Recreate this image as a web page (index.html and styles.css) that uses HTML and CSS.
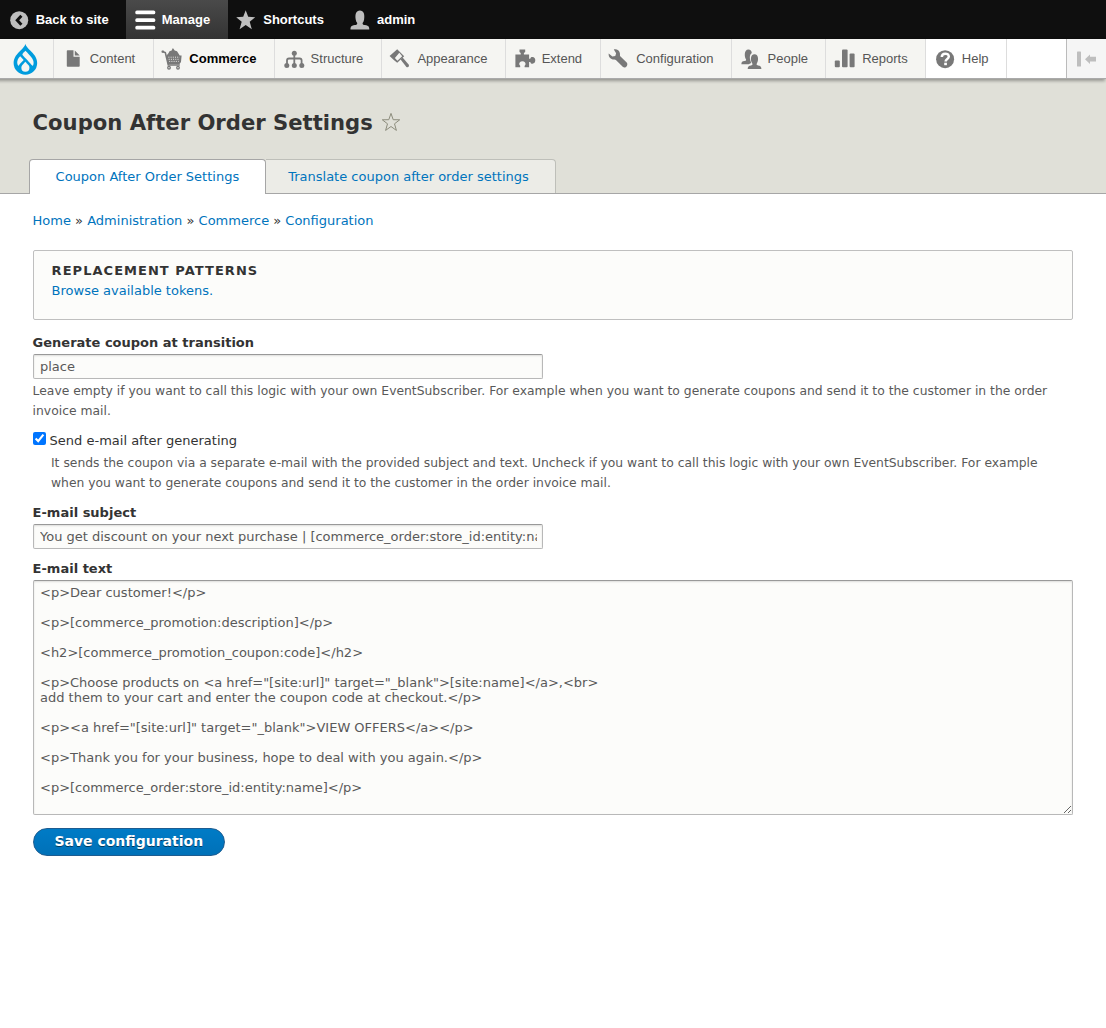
FILE: index.html
```html
<!DOCTYPE html>
<html lang="en">

<head>
    <meta charset="UTF-8">
    <meta name="viewport" content="width=device-width, initial-scale=1.0">
    <title>Coupon After Order Settings</title>
    <link rel="stylesheet" href="styles.css">
</head>

<body>
    <div class="toolbar">
        <nav class="toolbar-bar">
            <a class="toolbar-item" href="#">
                <svg class="icon" viewBox="0 0 20 20"><circle cx="10.2" cy="10.2" r="9" fill="#bebebe"/><path d="M12.4 5.700L8.200 10.200l4.200 4.500" fill="none" stroke="#0f0f0f" stroke-width="2.900"/></svg>
                Back to site
            </a>
            <a class="toolbar-item is-active" href="#">
                <svg class="icon" viewBox="0 0 20 20" fill="#fff"><rect x="0.3" y="0.5" width="20" height="3.8" rx="1.6"/><rect x="0.3" y="8.2" width="20" height="3.8" rx="1.6"/><rect x="0.3" y="15.8" width="20" height="3.8" rx="1.6"/></svg>
                Manage
            </a>
            <a class="toolbar-item" href="#">
                <svg class="icon" viewBox="0 0 20 20" fill="#bebebe"><path d="M9.700.2l2.500 6.600 7 .5-5.500 4.400 2.100 7.500-6.100-4.100-6.100 4.100 2.100-7.500L.2 7.300l7-.5z"/></svg>
                Shortcuts
            </a>
            <a class="toolbar-item" href="#">
                <svg class="icon" viewBox="0 0 20 20" fill="#bebebe"><path d="M.5 19.400c0-3 1-3.500 4.300-4.300 1.700-.4 2.600-.8 2.400-2.200-.8-.9-1.300-2-1.500-3.500C4.900 4 6.100.4 9.900.4s5 3.600 4.200 9c-.2 1.500-.7 2.600-1.500 3.500-.2 1.400.7 1.800 2.400 2.200 3.300.8 4.300 1.300 4.300 4.300z"/></svg>
                admin
            </a>
        </nav>
        <nav class="toolbar-tray">
            <a class="tray-item tray-home" href="#" aria-label="Home">
                <svg class="drop" viewBox="0 0 24 24" fill="#009cde"><path d="M15.78 5.113C14.09 3.425 12.48 1.815 11.998 0c-.48 1.815-2.09 3.425-3.778 5.113-2.534 2.53-5.405 5.4-5.405 9.702a9.184 9.185 0 1 0 18.368 0c0-4.303-2.871-7.171-5.405-9.702M6.72 16.954c-.563-.019-2.64-3.6 1.215-7.416l2.55 2.788a.218.218 0 0 1-.016.325c-.61.625-3.204 3.227-3.527 4.126-.066.186-.164.18-.222.177M12 21.677a3.158 3.158 0 0 1-3.158-3.159 3.291 3.291 0 0 1 .787-2.087c.57-.696 2.37-2.655 2.37-2.655s1.774 1.988 2.367 2.649a3.09 3.09 0 0 1 .792 2.093A3.158 3.158 0 0 1 12 21.677m6.046-5.123c-.068.15-.223.398-.431.405-.371.014-.411-.177-.686-.583-.604-.892-5.864-6.39-6.848-7.455-.866-.935-.122-1.595.223-1.94C10.736 6.547 12 5.285 12 5.285s3.766 3.574 5.336 6.016c1.57 2.443 1.029 4.556.71 5.253"/></svg>
            </a>
            <a class="tray-item" href="#">
                <svg class="icon" viewBox="0 0 20 20"><path d="M4.600 1.200h5.900v6.600h6.200v9.200a.8.8 0 0 1-.8.8H4.600a.8.8 0 0 1-.8-.8V2a.8.8 0 0 1 .8-.8zM11.800 1.500l4.900 4.900h-4.900z"/></svg>
                Content
            </a>
            <a class="tray-item is-active" href="#">
                <svg class="icon" viewBox="0 0 20 20"><path d="M4.600 6.400l1.800-2.200L7.700 2l1.700-.2L10.900-.9l1.800 2.300 2.300.9 1.300 1.900 1.400 2.200h1.900l-.6 6.500-1.700 2.400H6z"/><path d="M.3 2.500l3 1.100L6.300 16h11.500" fill="none" stroke="#787878" stroke-width="1.600"/><rect x="-.5" y="1.600" width="2.600" height="2.200" rx=".8"/><g fill="none" stroke="#f5f5f2" stroke-dasharray="1 1.200" stroke-width=".9"><path d="M6.400 8.200h11.200M6.700 10.300h10.500M7.200 12.400h9.500"/></g><circle cx="7" cy="18.700" r="1.300" fill="none" stroke="#787878" stroke-width="1.300"/><circle cx="16" cy="18.700" r="1.300" fill="none" stroke="#787878" stroke-width="1.300"/></svg>
                Commerce
            </a>
            <a class="tray-item" href="#">
                <svg class="icon" viewBox="0 0 20 20"><path d="M10.300 5v11.500M3 16.500v-5q0-2 2-2h10.600q2 0 2 2v5" fill="none" stroke="#787878" stroke-width="1.800"/><circle cx="10.300" cy="4.300" r="2.500"/><circle cx="2.800" cy="16.500" r="2.500"/><circle cx="10.300" cy="16.500" r="2.500"/><circle cx="17.800" cy="16.500" r="2.500"/></svg>
                Structure
            </a>
            <a class="tray-item" href="#">
                <svg class="icon" viewBox="0 0 20 20"><path fill-rule="evenodd" d="M7.200.3l7 6.900-7 6.600-3.100-2.600-4.500-4.100zM9.300 3.700L4.900 9l2.500 2.700 4.800-4.500z"/><path d="M10.600 10.400l2-2 6 7.200c1.300 1.600-.7 3.600-2.200 2.300z"/></svg>
                Appearance
            </a>
            <a class="tray-item" href="#">
                <svg class="icon" viewBox="0 0 20 20"><path d="M4.500.6h5.700v2.300L8.900 4v1.600h5.200v4.200h1.100l.8-1.500c2.700-.9 4.300.5 4.300 3s-1.600 4-4.300 3.100l-.8-1.500h-1.100v5.300H9.700l-.2-1.200 1-1.400c.4-2-1-3.400-3.100-3.400s-3.500 1.400-3.100 3.400l1 1.400-.2 1.200H.4V5.600h5.300V4L4.500 2.900z"/></svg>
                Extend
            </a>
            <a class="tray-item" href="#">
                <svg class="icon" viewBox="0 0 20 20"><path d="M4.800.5C7.700-.1 10.400 1.300 10.900 4.200c.2 1.100 0 2 .1 2.700l6.700 6.500c1.900 2.300-.8 6.500-3.700 4.700L6.900 11c-.8-.7-2-.4-3.200-.6C.9 9.900-.7 7.300-.3 4.600l3.700 3 2.900-.5.800-2.900z"/></svg>
                Configuration
            </a>
            <a class="tray-item" href="#">
                <svg class="icon" viewBox="0 0 20 20"><path d="M.4 15.300c0-2.400.9-2.800 3.100-3.200 1.600-.3 1.800-.8 1.500-1.800C3.300 8.100 2.900.5 7.400.5c2.100 0 3.200 1.400 3.400 3.500C8.500 5.700 8.500 9 9.600 12.300l.5 1.700-2.400 1.300z"/><path d="M6.700 19.900c0-2.600 1-3.100 3.400-3.500 1.500-.3 1.600-1 1.200-1.900-2-2.500-2.200-9.200 2.200-9.200s4.200 6.700 2.300 9.200c-.4.900-.3 1.600 1.200 1.900 2.400.4 3.400.9 3.400 3.500z"/></svg>
                People
            </a>
            <a class="tray-item" href="#">
                <svg class="icon" viewBox="0 0 20 20"><rect x="-.2" y="11.500" width="5" height="6.700" rx="1"/><rect x="7" y=".6" width="5.600" height="17.600" rx="1"/><rect x="14.600" y="4.600" width="5" height="13.600" rx="1"/></svg>
                Reports
            </a>
            <a class="tray-item tray-help" href="#">
                <svg class="icon" viewBox="0 0 20 20"><circle cx="10.100" cy="10.200" r="9"/><path d="M6.800 8c0-4.500 7-4.300 7-.5 0 2.600-3.200 2.200-3.200 5" fill="none" stroke="#fff" stroke-width="2.500"/><rect x="9.200" y="13.700" width="2.700" height="2.500" fill="#fff"/></svg>
                Help
            </a>
            <button class="tray-toggle" aria-label="Vertical orientation">
                <svg class="toggle-icon" viewBox="0 0 20 20" fill="#bebebe"><rect x="0" y="2.600" width="4" height="15" rx=".6"/><path d="M8 10.200l5-4.700v2.300h6v4.800h-6v2.300z"/></svg>
            </button>
        </nav>
    </div>

    <header class="page-header">
        <div class="title-row">
            <h1>Coupon After Order Settings</h1>
            <svg class="star" viewBox="0 0 20 20"><path d="M10 1.400l2.200 6.300 6.500.1-5.200 4 1.900 6.600-5.400-3.900-5.400 3.900 1.900-6.600-5.200-4 6.500-.1z" fill="none" stroke="#8c8c7c" stroke-width="1"/></svg>
        </div>
        <nav class="tabs">
            <a class="tab tab-active" href="#">Coupon After Order Settings</a>
            <a class="tab" href="#">Translate coupon after order settings</a>
        </nav>
    </header>

    <main class="content">
        <nav class="breadcrumb">
            <a href="#">Home</a> » <a href="#">Administration</a> » <a href="#">Commerce</a> » <a href="#">Configuration</a>
        </nav>

        <form>
            <div class="patterns">
                <h2>Replacement patterns</h2>
                <a href="#">Browse available tokens.</a>
            </div>

            <div class="form-item">
                <label class="form-label" for="transition">Generate coupon at transition</label>
                <input class="form-text" id="transition" type="text" value="place">
                <p class="description">Leave empty if you want to call this logic with your own EventSubscriber. For example when you want to generate coupons and send it to the customer in the order invoice mail.</p>
            </div>

            <div class="form-item form-check">
                <div class="check-row">
                    <input id="send" type="checkbox" checked>
                    <label for="send">Send e-mail after generating</label>
                </div>
                <p class="description">It sends the coupon via a separate e-mail with the provided subject and text. Uncheck if you want to call this logic with your own EventSubscriber. For example when you want to generate coupons and send it to the customer in the order invoice mail.</p>
            </div>

            <div class="form-item">
                <label class="form-label" for="subject">E-mail subject</label>
                <input class="form-text" id="subject" type="text" value="You get discount on your next purchase | [commerce_order:store_id:entity:name]">
            </div>

            <div class="form-item">
                <label class="form-label" for="text">E-mail text</label>
                <textarea class="form-textarea" id="text">&lt;p&gt;Dear customer!&lt;/p&gt;

&lt;p&gt;[commerce_promotion:description]&lt;/p&gt;

&lt;h2&gt;[commerce_promotion_coupon:code]&lt;/h2&gt;

&lt;p&gt;Choose products on &lt;a href="[site:url]" target="_blank"&gt;[site:name]&lt;/a&gt;,&lt;br&gt;
add them to your cart and enter the coupon code at checkout.&lt;/p&gt;

&lt;p&gt;&lt;a href="[site:url]" target="_blank"&gt;VIEW OFFERS&lt;/a&gt;&lt;/p&gt;

&lt;p&gt;Thank you for your business, hope to deal with you again.&lt;/p&gt;

&lt;p&gt;[commerce_order:store_id:entity:name]&lt;/p&gt;</textarea>
            </div>

            <button class="save-btn" type="button">Save configuration</button>
        </form>
    </main>
</body>

</html>
```
FILE: styles.css
```css
* {
    box-sizing: border-box;
}

body {
    margin: 0;
    background: #fff;
    color: #333;
    font: 13px/20px "DejaVu Sans", sans-serif;
}

a {
    color: #0074bd;
    text-decoration: none;
}

/* Toolbar */
.toolbar {
    position: relative;
    font: 13px/13px "Liberation Sans", Arial, sans-serif;
}

.toolbar-bar {
    display: flex;
    height: 39px;
    background: #0f0f0f;
}

.toolbar-item,
.tray-item {
    display: flex;
    align-items: center;
    gap: 7px;
    padding: 0 17.4px 0 8.7px;
    white-space: nowrap;
}

.toolbar-item {
    color: #fff;
    font-weight: bold;
}

.toolbar-item.is-active {
    background: linear-gradient(#4a4a4a, #333);
}

.icon {
    width: 20px;
    height: 20px;
    flex-shrink: 0;
    overflow: visible;
}

.toolbar-tray {
    display: flex;
    height: 40px;
    background: #fff;
    border-bottom: 1px solid #aaa;
    box-shadow: -2px 1px 3px 1px rgba(0, 0, 0, 0.33);
}

.tray-item {
    background: #f5f5f2;
    border-right: 1px solid #ddd;
    color: #565656;
    fill: #787878;
}

.tray-item.is-active {
    color: #000;
    font-weight: bold;
}

.tray-home {
    width: 54px;
    padding: 2px 0 0 10px;
}

.drop {
    width: 30.8px;
    height: 30.8px;
}

.tray-help {
    background: #fff;
}

.tray-toggle {
    width: 40px;
    margin-left: auto;
    padding: 0 0 0 10px;
    border: 0;
    border-left: 1px solid #bbb;
    background: #f5f5f5;
}

.toggle-icon {
    display: block;
    width: 20px;
    height: 20px;
}

/* Page header */
.page-header {
    height: 115px;
    padding: 31px 0 0 29px;
    background: #e0e0d8;
    border-bottom: 1px solid #a6a6a6;
}

.title-row {
    display: flex;
    align-items: center;
    gap: 8px;
    height: 26px;
    margin-bottom: 23px;
    padding-left: 3.6px;
}

h1 {
    margin: 0;
    font-size: 21.14px;
    line-height: 26px;
}

.star {
    width: 20px;
    height: 20px;
    margin-bottom: 2px;
}

.tabs {
    display: flex;
    height: 35px;
}

.tab {
    height: 34px;
    padding: 7px 26.4px 0 22.4px;
    border: 1px solid #bebfb9;
    border-width: 1px 1px 0 0;
    border-radius: 0 4px 0 0;
    background: rgba(255, 255, 255, 0.4);
    white-space: nowrap;
}

.tab-active {
    height: 35px;
    padding: 7px 25.6px 0;
    border: 1px solid #a6a6a6;
    border-bottom: 0;
    border-radius: 4px 4px 0 0;
    background: #fff;
}

/* Content */
.content {
    padding: 17px 32.6px 0;
}

.breadcrumb {
    margin-bottom: 19px;
}

.patterns {
    height: 70px;
    padding: 10px 18px;
    border: 1px solid #bfbfbf;
    border-radius: 2px;
    background: #fcfcfa;
}

.patterns h2 {
    margin: 0;
    font-size: 13px;
    line-height: 20px;
    letter-spacing: 1.04px;
    text-transform: uppercase;
}

.form-item {
    margin: 10px 0;
}

.patterns + .form-item {
    margin-top: 13px;
}

.form-label {
    display: block;
    height: 21px;
    font-weight: bold;
}

.form-text,
.form-textarea {
    display: block;
    margin: 0;
    border: 1px solid #b8b8b8;
    border-top-color: #999;
    border-radius: 2px;
    background: #fcfcfa;
    box-shadow: inset 0 1px 2px rgba(0, 0, 0, 0.125);
    color: #595959;
    font: 13px "DejaVu Sans", sans-serif;
}

.form-text {
    width: 510px;
    height: 25px;
    padding: 0 5px 0 6.4px;
}

.form-textarea {
    width: 100%;
    height: 235px;
    padding: 4px 6.4px;
    resize: vertical;
}

.description {
    margin: 2px 0 0;
    color: #595959;
    font-size: 12.35px;
}

.check-row {
    display: flex;
    gap: 4px;
}

.check-row input {
    width: 13px;
    height: 13px;
    margin: 1px 0 0;
}

.form-check .description {
    padding-left: 18.4px;
}

.save-btn {
    height: 28px;
    margin-top: 3px;
    padding: 0 20.8px 2px;
    border: 1px solid #1e5c90;
    border-radius: 14px;
    background: linear-gradient(#007bc6, #0071b8);
    color: #fff;
    font: bold 14px "DejaVu Sans", sans-serif;
    text-shadow: 0 1px rgba(0, 0, 0, 0.5);
}
```
